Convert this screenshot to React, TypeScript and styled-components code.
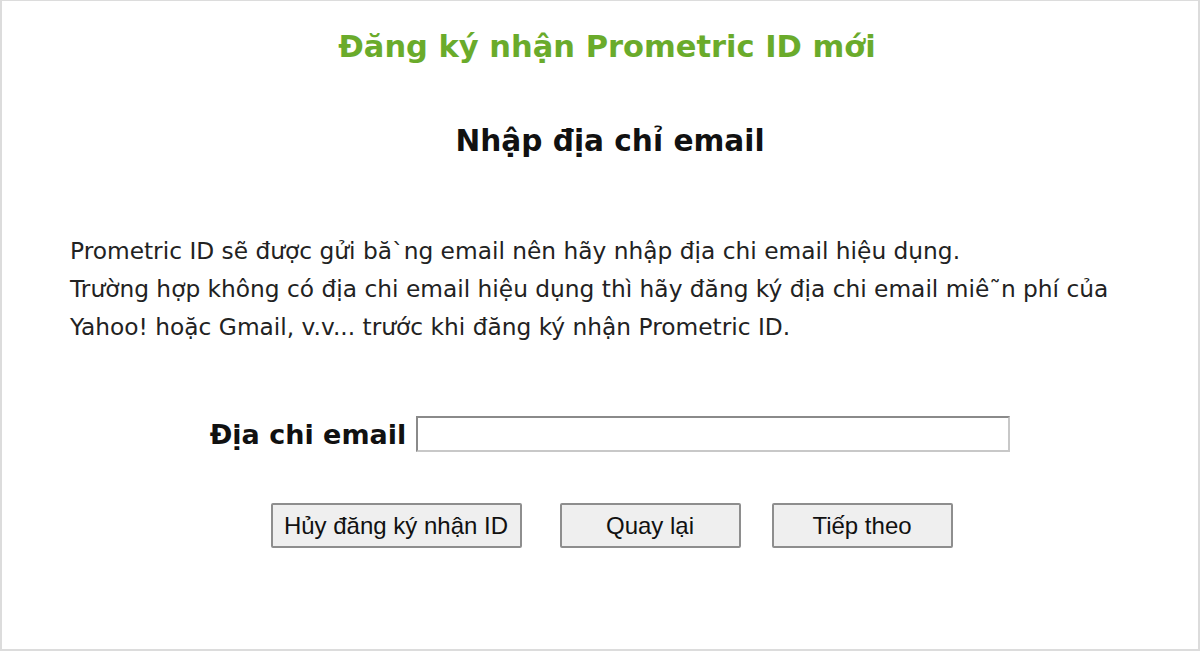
import styled, { createGlobalStyle } from "styled-components";

const GlobalStyle = createGlobalStyle`
  html, body {
    margin: 0;
    padding: 0;
    background: #ffffff;
  }
  body {
    font-family: "DejaVu Sans", "Noto Sans", sans-serif;
    color: #222222;
  }
`;

const Page = styled.div`
  box-sizing: border-box;
  width: 1200px;
  height: 651px;
  border: 2px solid #dcdcdc;
  border-top-width: 1px;
  display: flex;
  flex-direction: column;
  align-items: center;
`;

const Title = styled.h1`
  margin: 26px 0 0 14px;
  font-size: 30.5px;
  font-weight: bold;
  color: #6aab2b;
  line-height: 40px;
`;

const SubTitle = styled.h2`
  margin: 54px 0 0 20px;
  font-size: 29.6px;
  font-weight: bold;
  color: #111111;
  line-height: 40px;
`;

const Intro = styled.p`
  align-self: stretch;
  margin: 71px 0 0 68px;
  font-size: 23.3px;
  line-height: 38px;
  color: #222222;
`;

const FormRow = styled.div`
  display: flex;
  align-items: center;
  gap: 10px;
  margin: 70px 0 0 20px;
`;

const Label = styled.label`
  font-weight: bold;
  font-size: 27px;
  color: #111111;
`;

const EmailInput = styled.input`
  box-sizing: border-box;
  width: 594px;
  height: 36px;
  border: 2px solid #8a8a8a;
  border-right-color: #c8c8c8;
  border-bottom-color: #c8c8c8;
  background: #ffffff;
`;

const ButtonRow = styled.div`
  display: flex;
  margin: 51px 0 0 23px;
`;

const Button = styled.button<{ $width: number; $gap?: number }>`
  box-sizing: border-box;
  width: ${(p) => p.$width}px;
  margin-left: ${(p) => p.$gap ?? 0}px;
  height: 45px;
  background: #efefef;
  border: 2px solid #8e8e8e;
  border-radius: 2px;
  font-family: "Liberation Sans", Arial, sans-serif;
  font-size: 24px;
  color: #111111;
  cursor: pointer;
`;

export default function App() {
  return (
    <>
      <GlobalStyle />
      <Page>
        <Title>Đăng ký nhận Prometric ID mới</Title>
        <SubTitle>Nhập địa chỉ email</SubTitle>
        <Intro>
          Prometric ID sẽ được gửi bă`ng email nên hãy nhập địa chi email hiệu dụng.
          <br />
          Trường hợp không có địa chi email hiệu dụng thì hãy đăng ký địa chi email miê˜n phí của
          <br />
          Yahoo! hoặc Gmail, v.v... trước khi đăng ký nhận Prometric ID.
        </Intro>
        <FormRow>
          <Label htmlFor="email">Địa chi email</Label>
          <EmailInput id="email" type="text" />
        </FormRow>
        <ButtonRow>
          <Button $width={251}>Hủy đăng ký nhận ID</Button>
          <Button $width={181} $gap={38}>Quay lại</Button>
          <Button $width={181} $gap={31}>Tiếp theo</Button>
        </ButtonRow>
      </Page>
    </>
  );
}
